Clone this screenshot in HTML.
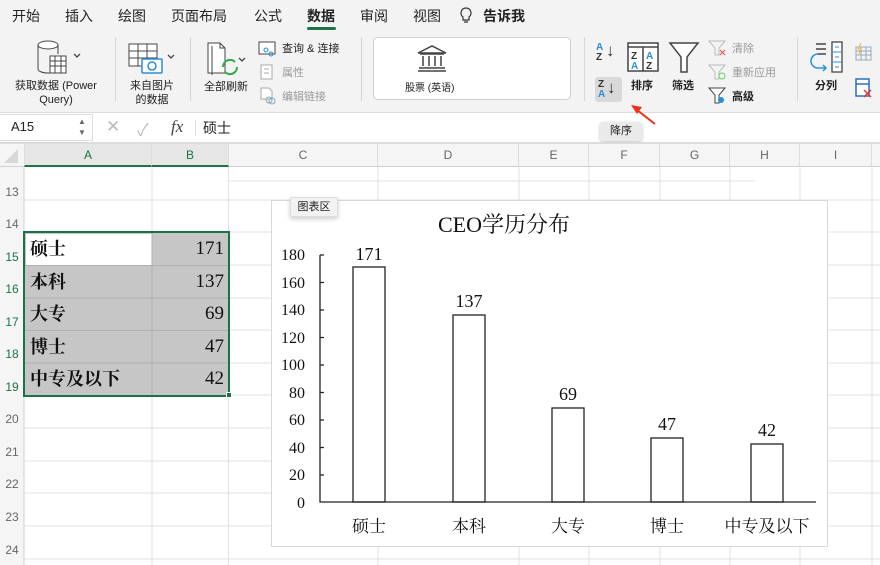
<!DOCTYPE html>
<html><head><meta charset="utf-8"><style>
*{margin:0;padding:0;box-sizing:border-box}
body{width:880px;height:565px;overflow:hidden;background:#fff;font-family:"Liberation Sans","Noto Sans CJK SC",sans-serif;position:relative;color:#222}
.a{position:absolute}
.tab{position:absolute;top:6px;font-size:14px;color:#222}
.sep{position:absolute;top:37px;width:1px;height:64px;background:#d8d8d8}
.lbl{position:absolute;font-size:11px;color:#222;text-align:center;line-height:14px}
.gray{color:#9a9a9a}
.col{position:absolute;top:144px;height:23px;font-size:12px;color:#666;text-align:center;line-height:23px;border-right:1px solid #dcdcdc}
.rn{position:absolute;left:0;width:24px;font-size:12px;color:#666;text-align:center}
.cell{position:absolute;font-family:"Liberation Serif","Noto Serif CJK SC",serif;font-weight:bold;font-size:18px;line-height:32px;color:#111}
.sv{font-family:"Liberation Serif","Noto Serif CJK SC",serif}
</style></head><body>
<div class="a" style="left:0;top:0;width:880px;height:112px;background:#f3f3f3"></div>
<div class="tab" style="left:12px">开始</div>
<div class="tab" style="left:65px">插入</div>
<div class="tab" style="left:118px">绘图</div>
<div class="tab" style="left:171px">页面布局</div>
<div class="tab" style="left:254px">公式</div>
<div class="tab" style="left:307px;font-weight:bold">数据</div>
<div class="a" style="left:307px;top:27px;width:29px;height:3px;background:#1e7145;border-radius:2px"></div>
<div class="tab" style="left:360px">审阅</div>
<div class="tab" style="left:413px">视图</div>
<svg class="a" style="left:459px;top:7px" width="14" height="18"><path d="M7 1a5 5 0 0 0-3 9v3h6v-3a5 5 0 0 0-3-9zM5 15h4" fill="none" stroke="#333" stroke-width="1.2"/></svg>
<div class="tab" style="left:483px;font-weight:bold">告诉我</div>

<div class="sep" style="left:115px"></div>
<div class="sep" style="left:190px"></div>
<div class="sep" style="left:361px"></div>
<div class="sep" style="left:584px"></div>
<div class="sep" style="left:797px"></div>

<svg class="a" style="left:36px;top:40px" width="50" height="36"><ellipse cx="12" cy="5" rx="10" ry="4" fill="#fff" stroke="#444"/><path d="M2 5v24c0 2 4 4 10 4h2M22 5v9" fill="none" stroke="#444"/><rect x="14" y="16" width="16" height="17" fill="#fff" stroke="#444"/><path d="M14 21h16M14 26h16M19 16v17M25 16v17" stroke="#444"/><path d="M38 14l3 3 3-3" fill="none" stroke="#444" stroke-width="1.3"/></svg>
<div class="lbl" style="left:8px;top:79px;width:96px">获取数据 (Power<br>Query)</div>
<svg class="a" style="left:128px;top:43px" width="50" height="34"><rect x="1" y="1" width="28" height="22" fill="#fff" stroke="#444"/><path d="M1 8h28M1 15h28M10 1v22M19 1v22" stroke="#444"/><rect x="14" y="16" width="20" height="14" rx="1" fill="#fff" stroke="#2a8fd6" stroke-width="1.5"/><circle cx="24" cy="23" r="4" fill="none" stroke="#2a8fd6" stroke-width="1.5"/><path d="M40 12l3 3 3-3" fill="none" stroke="#444" stroke-width="1.3"/></svg>
<div class="lbl" style="left:124px;top:79px;width:56px">来自图片<br>的数据</div>
<svg class="a" style="left:206px;top:41px" width="42" height="36"><path d="M2 32V2h12l5 5v25z" fill="#fff" stroke="#444"/><path d="M6 34V5" stroke="#444"/><path d="M14 2v5h5" fill="none" stroke="#444"/><path d="M17 26a7 7 0 0 1 12-5M31 26a7 7 0 0 1-12 5" fill="none" stroke="#2eaa4a" stroke-width="2"/><path d="M33 17l3 3 3-3" fill="none" stroke="#444" stroke-width="1.3"/></svg>
<div class="lbl" style="left:198px;top:80px;width:56px">全部刷新</div>
<svg class="a" style="left:258px;top:41px" width="18" height="16"><rect x="1" y="1" width="16" height="12" fill="#fff" stroke="#444"/><circle cx="8" cy="9" r="2" fill="none" stroke="#2a8fd6"/><circle cx="13" cy="13" r="2" fill="none" stroke="#2a8fd6"/></svg>
<div class="lbl" style="left:282px;top:42px">查询 &amp; 连接</div>
<svg class="a" style="left:260px;top:64px" width="14" height="16"><rect x="1" y="1" width="11" height="14" fill="#fff" stroke="#aaa"/><path d="M4 5h5M4 9h5" stroke="#aaa"/></svg>
<div class="lbl gray" style="left:282px;top:66px">属性</div>
<svg class="a" style="left:260px;top:87px" width="16" height="18"><path d="M1 1h8l3 3v8H1z" fill="#fff" stroke="#aaa"/><circle cx="9" cy="13" r="3" fill="none" stroke="#8ab"/><circle cx="12" cy="14" r="3" fill="none" stroke="#8ab"/></svg>
<div class="lbl gray" style="left:282px;top:90px">编辑链接</div>
<div class="a" style="left:373px;top:37px;width:198px;height:63px;background:#fff;border:1px solid #d0d0d0;border-radius:5px"></div>
<svg class="a" style="left:416px;top:44px" width="32" height="28"><path d="M2 9L16 2l14 7z" fill="#fff" stroke="#444" stroke-width="1.5"/><path d="M4 10h24M7 12v10M13 12v10M19 12v10M25 12v10M3 24h26M2 27h28" stroke="#444" stroke-width="1.5"/></svg>
<div class="lbl" style="left:405px;top:82px;font-size:10px">股票 (英语)</div>
<div class="a" style="left:596px;top:43px;font-size:10px;font-weight:bold;line-height:10px;color:#2a8fd6">A<br><span style="color:#333">Z</span></div><div class="a" style="left:606px;top:41px;font-size:17px;color:#333">↓</div>
<div class="a" style="left:595px;top:77px;width:27px;height:25px;background:#d9d9d9;border-radius:3px"></div>
<div class="a" style="left:598px;top:80px;font-size:10px;font-weight:bold;line-height:10px;color:#333">Z<br><span style="color:#2a8fd6">A</span></div><div class="a" style="left:607px;top:78px;font-size:17px;color:#333">↓</div>
<svg class="a" style="left:627px;top:42px" width="32" height="30"><rect x="1" y="1" width="30" height="28" fill="#fff" stroke="#444" stroke-width="1.5"/><path d="M1 5h30M16 5v24" stroke="#444" stroke-width="1.5"/><text x="4" y="17" font-size="10" font-weight="bold" fill="#333" font-family="Liberation Sans">Z</text><text x="4" y="27" font-size="10" font-weight="bold" fill="#2a8fd6" font-family="Liberation Sans">A</text><text x="19" y="17" font-size="10" font-weight="bold" fill="#2a8fd6" font-family="Liberation Sans">A</text><text x="19" y="27" font-size="10" font-weight="bold" fill="#333" font-family="Liberation Sans">Z</text></svg>
<div class="lbl" style="left:631px;top:79px;font-weight:bold">排序</div>
<svg class="a" style="left:668px;top:41px" width="32" height="32"><path d="M2 2h28l-11 14v15h-6V16z" fill="#fff" stroke="#444" stroke-width="1.5"/></svg>
<div class="lbl" style="left:672px;top:79px;font-weight:bold">筛选</div>
<svg class="a" style="left:708px;top:40px" width="18" height="16"><path d="M1 1h16l-6 7v7h-4V8z" fill="none" stroke="#bbb"/><path d="M12 10l5 5M17 10l-5 5" stroke="#e55" stroke-width="1.2"/></svg>
<div class="lbl gray" style="left:732px;top:42px">清除</div>
<svg class="a" style="left:708px;top:64px" width="18" height="16"><path d="M1 1h16l-6 7v7h-4V8z" fill="none" stroke="#bbb"/><circle cx="14" cy="12" r="3" fill="none" stroke="#6c6"/></svg>
<div class="lbl gray" style="left:732px;top:66px">重新应用</div>
<svg class="a" style="left:708px;top:87px" width="18" height="18"><path d="M1 1h16l-6 7v8h-4V8z" fill="#fff" stroke="#444"/><circle cx="13" cy="13" r="3" fill="#2a8fd6"/></svg>
<div class="lbl" style="left:732px;top:90px;font-weight:bold">高级</div>
<svg class="a" style="left:808px;top:41px" width="36" height="34"><path d="M8 3h10M8 8h10M10 13h8" stroke="#444" stroke-width="1.5"/><path d="M10 13a7 7 0 0 0 0 14h8" fill="none" stroke="#2a8fd6" stroke-width="1.5"/><path d="M15 24l3 3-3 3" fill="none" stroke="#2a8fd6" stroke-width="1.5"/><rect x="24" y="1" width="10" height="30" fill="#fff" stroke="#444" stroke-width="1.3"/><path d="M24 11h10M24 21h10M27 6h4M27 16h4M27 26h4" stroke="#2a8fd6"/></svg>
<div class="lbl" style="left:815px;top:79px;font-weight:bold">分列</div>
<svg class="a" style="left:853px;top:42px" width="20" height="20"><rect x="3" y="5" width="15" height="13" fill="none" stroke="#9ab"/><path d="M3 9h15M3 13h15M8 5v13M13 5v13" stroke="#9ab"/><path d="M8 1l-3 6h3l-2 5" stroke="#f0b040" fill="none"/></svg>
<svg class="a" style="left:855px;top:78px" width="18" height="22"><rect x="1" y="1" width="13" height="17" fill="#fff" stroke="#2a6fbf" stroke-width="1.5"/><path d="M1 6h13" stroke="#2a6fbf" stroke-width="1.5"/><path d="M9 12l7 7M16 12l-7 7" stroke="#e33" stroke-width="1.5"/></svg>

<div class="a" style="left:0;top:112px;width:880px;height:32px;background:#fff;border-top:1px solid #ddd"></div>
<div class="a" style="left:0;top:114px;width:93px;height:27px;border:1px solid #ddd;border-left:none"></div>
<div class="a" style="left:11px;top:119px;font-size:13px">A15</div>
<div class="a" style="left:78px;top:116px;font-size:8px;color:#666;line-height:11px">▲<br>▼</div>
<div class="a" style="left:106px;top:117px;font-size:17px;color:#bbb">✕</div>
<div class="a" style="left:137px;top:116px;font-size:17px;color:#bbb">✓</div>
<div class="a sv" style="left:171px;top:117px;font-size:17px;font-style:italic;color:#444">fx</div>
<div class="a" style="left:195px;top:120px;width:1px;height:16px;background:#ddd"></div>
<div class="a" style="left:203px;top:118px;font-size:14px">硕士</div>
<div class="a" style="left:600px;top:122px;width:42px;height:19px;background:#eaeaea;border-radius:3px;box-shadow:0 1px 3px rgba(0,0,0,.25);font-size:11px;text-align:center;line-height:19px">降序</div>
<svg class="a" style="left:625px;top:100px" width="35" height="28"><path d="M30 24L12 10" stroke="#e8321e" stroke-width="2"/><path d="M6 5l11 2-5 7z" fill="#e8321e"/></svg>

<div class="a" style="left:0;top:142px;width:880px;height:2px;background:#dcdcdc"></div>
<div class="a" style="left:0;top:144px;width:880px;height:23px;background:#f5f5f5;border-bottom:1px solid #d0d0d0"></div>
<div class="a" style="left:4px;top:149px;width:0;height:0;border-left:14px solid transparent;border-bottom:14px solid #d8d8d8"></div>
<div class="col" style="left:24px;width:128px;color:#1e7145;background:#e6e6e6;border-bottom:2px solid #1e7145;border-left:1px solid #dcdcdc">A</div>
<div class="col" style="left:152px;width:77px;color:#1e7145;background:#e6e6e6;border-bottom:2px solid #1e7145">B</div>
<div class="col" style="left:229px;width:149px">C</div>
<div class="col" style="left:378px;width:141px">D</div>
<div class="col" style="left:519px;width:70px">E</div>
<div class="col" style="left:589px;width:71px">F</div>
<div class="col" style="left:660px;width:70px">G</div>
<div class="col" style="left:730px;width:70px">H</div>
<div class="col" style="left:800px;width:72px">I</div>

<svg class="a" style="left:0;top:167px" width="880" height="398">
<g stroke="#e2e2e2" stroke-width="1">
<path d="M24 0V398M152 0V398M228.5 0V398M378 0V398M519 0V398M589 0V398M660 0V398M730 0V398M800 0V398M872 0V398"/>
<path d="M0 33H880M0 65H880M0 98H880M0 131H880M0 163H880M0 196H880M0 228H880M0 261H880M0 294H880M0 326H880M0 359H880M0 392H880"/>
<path d="M229 14H755"/>
</g>
<rect x="0" y="0" width="24" height="398" fill="#f5f5f5"/>
<path d="M24 0V398" stroke="#d0d0d0"/>
</svg>
<div class="rn" style="top:185px">13</div>
<div class="rn" style="top:217px">14</div>
<div class="rn" style="top:250px;color:#1e7145">15</div>
<div class="rn" style="top:282px;color:#1e7145">16</div>
<div class="rn" style="top:315px;color:#1e7145">17</div>
<div class="rn" style="top:347px;color:#1e7145">18</div>
<div class="rn" style="top:380px;color:#1e7145">19</div>
<div class="rn" style="top:412px">20</div>
<div class="rn" style="top:445px">21</div>
<div class="rn" style="top:477px">22</div>
<div class="rn" style="top:510px">23</div>
<div class="rn" style="top:543px">24</div>

<div class="a" style="left:25px;top:233px;width:203px;height:162px;background:#c6c6c6"></div>
<div class="a" style="left:26px;top:234px;width:126px;height:31px;background:#fff"></div>
<svg class="a" style="left:25px;top:233px" width="204" height="163"><path d="M0 32.5H203M0 65H203M0 97.5H203M0 130H203M127 0V162" stroke="#b0b0b0"/></svg>
<div class="a" style="left:23px;top:231px;width:207px;height:166px;border:2px solid #1e7145"></div>
<div class="a" style="left:226px;top:392px;width:6px;height:6px;background:#1e7145;border:1px solid #fff"></div>
<div class="cell" style="left:30px;top:233px">硕士</div>
<div class="cell" style="left:30px;top:266px">本科</div>
<div class="cell" style="left:30px;top:298px">大专</div>
<div class="cell" style="left:30px;top:331px">博士</div>
<div class="cell" style="left:30px;top:363px">中专及以下</div>
<div class="cell" style="left:152px;top:233px;width:72px;text-align:right;font-weight:normal;font-size:19px">171</div>
<div class="cell" style="left:152px;top:266px;width:72px;text-align:right;font-weight:normal;font-size:19px">137</div>
<div class="cell" style="left:152px;top:298px;width:72px;text-align:right;font-weight:normal;font-size:19px">69</div>
<div class="cell" style="left:152px;top:331px;width:72px;text-align:right;font-weight:normal;font-size:19px">47</div>
<div class="cell" style="left:152px;top:363px;width:72px;text-align:right;font-weight:normal;font-size:19px">42</div>

<svg class="a" style="left:271px;top:200px" width="558" height="348" font-family="Liberation Serif,Noto Serif CJK SC,serif">
<rect x="0.5" y="0.5" width="556" height="346" fill="#fff" stroke="#d8d8d8"/>
<text x="233" y="32" font-size="22" text-anchor="middle" fill="#111">CEO学历分布</text>
<g font-size="16" text-anchor="end" fill="#111">
<text x="34" y="60">180</text><text x="34" y="88">160</text><text x="34" y="115">140</text><text x="34" y="143">120</text><text x="34" y="170">100</text><text x="34" y="198">80</text><text x="34" y="225">60</text><text x="34" y="253">40</text><text x="34" y="280">20</text><text x="34" y="308">0</text>
</g>
<g stroke="#222" stroke-width="1.3" fill="none">
<path d="M49 55V302H545"/>
<path d="M49 55h4M49 82.5h4M49 110h4M49 137.5h4M49 165h4M49 192.5h4M49 220h4M49 247.5h4M49 275h4"/>
<rect x="82" y="67" width="32" height="235"/>
<rect x="182" y="115" width="32" height="187"/>
<rect x="281" y="208" width="32" height="94"/>
<rect x="380" y="238" width="32" height="64"/>
<rect x="480" y="244" width="32" height="58"/>
</g>
<g font-size="18" text-anchor="middle" fill="#111">
<text x="98" y="60">171</text><text x="198" y="107">137</text><text x="297" y="200">69</text><text x="396" y="230">47</text><text x="496" y="236">42</text>
</g>
<g font-size="17" text-anchor="middle" fill="#111">
<text x="98" y="332">硕士</text><text x="198" y="332">本科</text><text x="297" y="332">大专</text><text x="396" y="332">博士</text><text x="496" y="332">中专及以下</text>
</g>
</svg>
<div class="a" style="left:290px;top:197px;width:48px;height:20px;background:#f2f2f2;border:1px solid #ddd;border-radius:2px;box-shadow:0 2px 5px rgba(0,0,0,.2);font-size:11px;text-align:center;line-height:18px">图表区</div>
</body></html>
